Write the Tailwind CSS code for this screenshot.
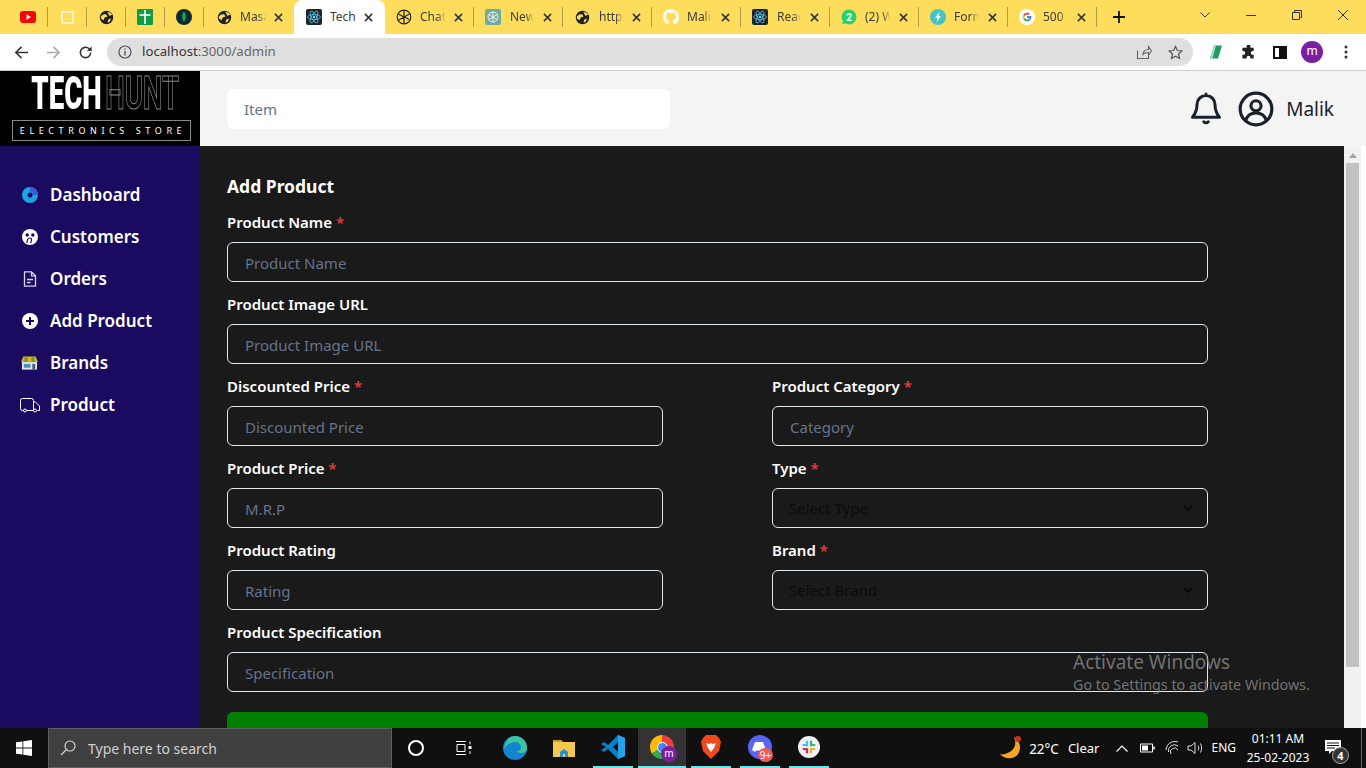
<!DOCTYPE html>
<html lang="en">
<head>
    <meta charset="UTF-8" />
    <title>Tech Hunt - Admin</title>
    <script src="https://cdn.jsdelivr.net/npm/@tailwindcss/browser@4"></script>
</head>
<body class="h-screen w-screen overflow-hidden flex flex-col bg-white font-['Noto_Sans',sans-serif]">

    <!-- tab strip -->
    <div class="h-[34px] shrink-0 bg-[#ffdd5c] flex items-center pl-[9px] text-[12px] text-[#3c3c3c]">
        <div class="w-[39px] h-[20px] flex items-center justify-center border-r border-[#b09a4a]">
            <svg viewBox="0 0 16 12" class="w-4 h-3"><rect width="16" height="12" rx="3" fill="#f00"/><path d="M6.5 3.2v5.6L11 6z" fill="#fff"/></svg>
        </div>
        <div class="w-[39px] h-[20px] flex items-center justify-center border-r border-[#b09a4a]">
            <div class="w-[13px] h-[13px] border-2 border-[#fff3c0]"></div>
        </div>
        <div class="w-[39px] h-[20px] flex items-center justify-center border-r border-[#b09a4a]">
            <svg viewBox="0 0 16 16" class="w-[15px] h-[15px]"><circle cx="8" cy="8" r="7.2" fill="#222"/><path d="M2 7c2-2 4-3 6-2l1 2-3 1-1 3-3-2zM9 2c2 0 4 1 5 3l-3 1zM10 10l3-1-2 4-2 0z" fill="#ffdd5c"/></svg>
        </div>
        <div class="w-[39px] h-[20px] flex items-center justify-center border-r border-[#b09a4a]">
            <svg viewBox="0 0 16 16" class="w-4 h-4"><rect width="16" height="16" rx="1" fill="#119a4a"/><path d="M2.500 6h11M8 1v14" stroke="#fff" stroke-width="1.600"/></svg>
        </div>
        <div class="w-[39px] h-[20px] flex items-center justify-center border-r border-[#b09a4a]">
            <svg viewBox="0 0 16 16" class="w-4 h-4"><circle cx="8" cy="8" r="8" fill="#0b2a33"/><path d="M8 2.500c2.400 2.400 2.400 7 0 10.500-2.400-3.500-2.400-8.100 0-10.500z" fill="#13aa52"/></svg>
        </div>

        <div class="w-[90px] h-[20px] flex items-center pl-[13px] pr-[11px]">
            <svg viewBox="0 0 16 16" class="w-[15px] h-[15px] shrink-0"><circle cx="8" cy="8" r="7.2" fill="#222"/><path d="M2 7c2-2 4-3 6-2l1 2-3 1-1 3-3-2zM9 2c2 0 4 1 5 3l-3 1zM10 10l3-1-2 4-2 0z" fill="#ffdd5c"/></svg>
            <span class="ml-[8px] w-[27px] overflow-hidden whitespace-nowrap [mask-image:linear-gradient(to_right,#000_65%,transparent)]">Masa</span>
            <svg viewBox="0 0 10 10" class="w-[9px] h-[9px] ml-auto"><path d="M1 1l8 8M9 1l-8 8" stroke="#333" stroke-width="1.700"/></svg>
        </div>
        <div class="w-[91px] h-[34px] bg-white rounded-t-[8px] flex items-center pl-[12px] pr-[12px]">
            <svg viewBox="0 0 16 16" class="w-4 h-4 shrink-0"><rect width="16" height="16" rx="2" fill="#20232a"/><g fill="none" stroke="#61dafb" stroke-width=".7"><ellipse cx="8" cy="8" rx="6.500" ry="2.500"/><ellipse cx="8" cy="8" rx="6.500" ry="2.500" transform="rotate(60 8 8)"/><ellipse cx="8" cy="8" rx="6.500" ry="2.500" transform="rotate(120 8 8)"/></g><circle cx="8" cy="8" r="1.300" fill="#61dafb"/></svg>
            <span class="ml-[8px] w-[26px] whitespace-nowrap">Tech</span>
            <svg viewBox="0 0 10 10" class="w-[9px] h-[9px] ml-auto"><path d="M1 1l8 8M9 1l-8 8" stroke="#333" stroke-width="1.700"/></svg>
        </div>
        <div class="w-[89px] h-[20px] flex items-center pl-[11px] pr-[10px] border-r border-[#b09a4a]">
            <svg viewBox="0 0 16 16" class="w-4 h-4 shrink-0" fill="none" stroke="#222" stroke-width="1.200"><circle cx="8" cy="8" r="6.800"/><path d="M8 1.500v6l5 3M2.500 5l5.500 3v6M13.500 5L8 8l-5 3"/></svg>
            <span class="ml-[8px] w-[26px] overflow-hidden whitespace-nowrap [mask-image:linear-gradient(to_right,#000_65%,transparent)]">Chat</span>
            <svg viewBox="0 0 10 10" class="w-[9px] h-[9px] ml-auto"><path d="M1 1l8 8M9 1l-8 8" stroke="#333" stroke-width="1.700"/></svg>
        </div>
        <div class="w-[89px] h-[20px] flex items-center pl-[11px] pr-[10px] border-r border-[#b09a4a]">
            <svg viewBox="0 0 16 16" class="w-4 h-4 shrink-0"><rect width="16" height="16" rx="2" fill="#74aa9c"/><g fill="none" stroke="#e8f2ef" stroke-width="1"><circle cx="8" cy="8" r="5"/><path d="M8 3v5l4 2.500M4 5.500L8 8v5M12 5.500L8 8l-4 2.500"/></g></svg>
            <span class="ml-[9px] w-[24px] overflow-hidden whitespace-nowrap [mask-image:linear-gradient(to_right,#000_65%,transparent)]">New</span>
            <svg viewBox="0 0 10 10" class="w-[9px] h-[9px] ml-auto"><path d="M1 1l8 8M9 1l-8 8" stroke="#333" stroke-width="1.700"/></svg>
        </div>
        <div class="w-[89px] h-[20px] flex items-center pl-[12px] pr-[10px] border-r border-[#b09a4a]">
            <svg viewBox="0 0 16 16" class="w-[15px] h-[15px] shrink-0"><circle cx="8" cy="8" r="7.200" fill="#222"/><path d="M2 7c2-2 4-3 6-2l1 2-3 1-1 3-3-2zM9 2c2 0 4 1 5 3l-3 1zM10 10l3-1-2 4-2 0z" fill="#ffdd5c"/></svg>
            <span class="ml-[9px] w-[25px] overflow-hidden whitespace-nowrap [mask-image:linear-gradient(to_right,#000_65%,transparent)]">https</span>
            <svg viewBox="0 0 10 10" class="w-[9px] h-[9px] ml-auto"><path d="M1 1l8 8M9 1l-8 8" stroke="#333" stroke-width="1.700"/></svg>
        </div>
        <div class="w-[89px] h-[20px] flex items-center pl-[11px] pr-[10px] border-r border-[#b09a4a]">
            <svg viewBox="0 0 16 16" class="w-4 h-4 shrink-0"><path fill="#fff" d="M8 0C3.580 0 0 3.580 0 8c0 3.540 2.290 6.530 5.470 7.590.4.070.55-.17.55-.38 0-.19-.01-.82-.01-1.490-2.010.37-2.530-.49-2.690-.94-.09-.23-.48-.94-.82-1.130-.28-.15-.68-.52-.01-.53.63-.01 1.080.58 1.230.82.72 1.210 1.870.87 2.330.66.070-.52.28-.87.51-1.070-1.780-.2-3.640-.89-3.640-3.950 0-.87.31-1.590.82-2.150-.08-.2-.36-1.020.08-2.120 0 0 .67-.21 2.200.82.64-.18 1.320-.27 2-.27.68 0 1.360.09 2 .27 1.530-1.040 2.200-.82 2.200-.82.44 1.100.16 1.920.08 2.120.51.56.82 1.270.82 2.150 0 3.070-1.870 3.750-3.650 3.950.29.25.54.73.54 1.480 0 1.070-.01 1.930-.01 2.200 0 .21.15.46.55.38A8.013 8.013 0 0 0 16 8c0-4.420-3.580-8-8-8z"/></svg>
            <span class="ml-[8px] w-[25px] overflow-hidden whitespace-nowrap [mask-image:linear-gradient(to_right,#000_65%,transparent)]">Malik</span>
            <svg viewBox="0 0 10 10" class="w-[9px] h-[9px] ml-auto"><path d="M1 1l8 8M9 1l-8 8" stroke="#333" stroke-width="1.700"/></svg>
        </div>
        <div class="w-[89px] h-[20px] flex items-center pl-[11px] pr-[10px] border-r border-[#b09a4a]">
            <svg viewBox="0 0 16 16" class="w-4 h-4 shrink-0"><rect width="16" height="16" rx="2" fill="#20232a"/><g fill="none" stroke="#61dafb" stroke-width=".7"><ellipse cx="8" cy="8" rx="6.500" ry="2.500"/><ellipse cx="8" cy="8" rx="6.500" ry="2.500" transform="rotate(60 8 8)"/><ellipse cx="8" cy="8" rx="6.500" ry="2.500" transform="rotate(120 8 8)"/></g><circle cx="8" cy="8" r="1.300" fill="#61dafb"/></svg>
            <span class="ml-[9px] w-[24px] overflow-hidden whitespace-nowrap [mask-image:linear-gradient(to_right,#000_65%,transparent)]">React</span>
            <svg viewBox="0 0 10 10" class="w-[9px] h-[9px] ml-auto"><path d="M1 1l8 8M9 1l-8 8" stroke="#333" stroke-width="1.700"/></svg>
        </div>
        <div class="w-[89px] h-[20px] flex items-center pl-[11px] pr-[10px] border-r border-[#b09a4a]">
            <svg viewBox="0 0 16 16" class="w-4 h-4 shrink-0"><circle cx="8" cy="8" r="7.500" fill="#25d366"/><path d="M1 15l1.500-4 2.500 3z" fill="#25d366"/><text x="8" y="11.500" font-size="10" font-weight="700" text-anchor="middle" fill="#fff" font-family="Roboto">2</text></svg>
            <span class="ml-[8px] w-[26px] overflow-hidden whitespace-nowrap [mask-image:linear-gradient(to_right,#000_65%,transparent)]">(2) W</span>
            <svg viewBox="0 0 10 10" class="w-[9px] h-[9px] ml-auto"><path d="M1 1l8 8M9 1l-8 8" stroke="#333" stroke-width="1.700"/></svg>
        </div>
        <div class="w-[89px] h-[20px] flex items-center pl-[11px] pr-[10px] border-r border-[#b09a4a]">
            <svg viewBox="0 0 16 16" class="w-4 h-4 shrink-0"><circle cx="8" cy="8" r="8" fill="#45c4c0"/><path d="M9.500 2.500L5 9h2.500L6.500 13.500 11 7H8.500z" fill="#e8fbfa"/></svg>
            <span class="ml-[8px] w-[25px] overflow-hidden whitespace-nowrap [mask-image:linear-gradient(to_right,#000_65%,transparent)]">Form</span>
            <svg viewBox="0 0 10 10" class="w-[9px] h-[9px] ml-auto"><path d="M1 1l8 8M9 1l-8 8" stroke="#333" stroke-width="1.700"/></svg>
        </div>
        <div class="w-[89px] h-[20px] flex items-center pl-[11px] pr-[10px] border-r border-[#b09a4a]">
            <svg viewBox="0 0 16 16" class="w-4 h-4 shrink-0"><circle cx="8" cy="8" r="8" fill="#fff"/><path d="M5 6.500A3.500 3.500 0 0 1 10.400 5.400" fill="none" stroke="#ea4335" stroke-width="1.800"/><path d="M5 6.500a3.500 3.500 0 0 0 0 3" fill="none" stroke="#fbbc05" stroke-width="1.800"/><path d="M5 9.500a3.500 3.500 0 0 0 5.500 1" fill="none" stroke="#34a853" stroke-width="1.800"/><path d="M8 8h3.500a3.500 3.500 0 0 1-1 2.500" fill="none" stroke="#4285f4" stroke-width="1.800"/></svg>
            <span class="ml-[8px] w-[25px] overflow-hidden whitespace-nowrap [mask-image:linear-gradient(to_right,#000_65%,transparent)]">500 e</span>
            <svg viewBox="0 0 10 10" class="w-[9px] h-[9px] ml-auto"><path d="M1 1l8 8M9 1l-8 8" stroke="#333" stroke-width="1.700"/></svg>
        </div>
        <svg viewBox="0 0 12 12" class="w-3 h-3 ml-[16px]" fill="none"><path d="M6 0v12M0 6h12" stroke="#111" stroke-width="1.800"/></svg>
        <div class="ml-auto flex items-center h-full">
            <svg viewBox="0 0 10 6" class="w-[10px] h-[6px] mb-[4px] mr-[36px]"><path d="M.5.500L5 5 9.500.500" fill="none" stroke="#333" stroke-width="1"/></svg>
            <div class="w-[10px] h-px bg-[#333] mb-[4px] mr-[36px]"></div>
            <svg viewBox="0 0 10 10" class="w-[10px] h-[10px] mb-[4px] mr-[36px]"><path d="M.5 2.500h7v7h-7zM2.500 2.500v-2h7v7h-2" fill="none" stroke="#333" stroke-width="1"/></svg>
            <svg viewBox="0 0 10 10" class="w-[10px] h-[10px] mb-[4px] mr-[18px]"><path d="M0 0l10 10M10 0L0 10" stroke="#333" stroke-width="1"/></svg>
        </div>
    </div>

    <!-- address bar -->
    <div class="h-[37px] shrink-0 bg-white border-b border-[#cfcfcf] flex items-center">
        <svg viewBox="0 0 16 16" class="w-[15px] h-[15px] ml-[14px]" fill="none" stroke="#333" stroke-width="1.700"><path d="M15 8H2M8 2L2 8l6 6"/></svg>
        <svg viewBox="0 0 16 16" class="w-[15px] h-[15px] ml-[17px]" fill="none" stroke="#aaa" stroke-width="1.700"><path d="M1 8h13M8 2l6 6-6 6"/></svg>
        <svg viewBox="0 0 16 16" class="w-[15px] h-[15px] ml-[17px]" fill="none" stroke="#333" stroke-width="1.700"><path d="M13.500 8a5.500 5.500 0 1 1-1.600-3.900L14 6"/><path d="M14.500 1.500V6.500H9.500z" fill="#333" stroke="none"/></svg>
        <div class="ml-[14px] w-[1086px] h-[28px] rounded-full bg-[#dfdfdf] flex items-center pl-[11px] pr-[10px]">
            <svg viewBox="0 0 14 14" class="w-[14px] h-[14px]" fill="none" stroke="#555" stroke-width="1.200"><circle cx="7" cy="7" r="6"/><path d="M7 6v4.500M7 3.500v1.200" stroke-width="1.400"/></svg>
            <span class="ml-[10px] text-[13.200px] text-[#333]">localhost<span class="text-[#666]">:3000/admin</span></span>
            <svg viewBox="0 0 16 16" class="w-[16px] h-[16px] ml-auto mr-[16px]" fill="none" stroke="#666" stroke-width="1.100"><path d="M1.500 6.500v8h11v-3M7 10.500c0-3 2-5 5.500-5V2.500l3 4.500-3 4V8.500c-2.500 0-4.500.5-5.500 2z"/></svg>
            <svg viewBox="0 0 16 16" class="w-[15px] h-[15px]" fill="none" stroke="#555" stroke-width="1.300"><path d="M8 1.500l2 4.400 4.800.5-3.600 3.200 1 4.700L8 11.900l-4.200 2.400 1-4.700L1.200 6.400 6 5.900z"/></svg>
        </div>
        <svg viewBox="0 0 14 16" class="w-[14px] h-[16px] ml-[16px]"><path d="M5 1.500h8L9 14.500H1z" fill="#1f9d62"/><path d="M5 1.500L1 14.500h2.500L7 1.500z" fill="#a8dcc4"/></svg>
        <svg viewBox="0 0 16 16" class="w-[15px] h-[15px] ml-[18px]" fill="#222"><path d="M6 1.500a2 2 0 0 1 4 0V3h3.500v3.500h-1a2 2 0 0 0 0 4h1V14.500H10v-1a2 2 0 0 0-4 0v1H1.500V10.500h1a2 2 0 0 0 0-4h-1V3H6z"/></svg>
        <div class="w-[14px] h-[13px] ml-[17px] border-2 border-[#111] flex justify-end"><div class="w-[6px] bg-[#111]"></div></div>
        <div class="w-[22px] h-[22px] ml-[14px] rounded-full bg-[#7b1fa2] text-white text-[12px] leading-[20px] text-center">m</div>
        <svg viewBox="0 0 4 14" class="w-[4px] h-[14px] ml-[21px]" fill="#333"><circle cx="2" cy="2" r="1.500"/><circle cx="2" cy="7" r="1.500"/><circle cx="2" cy="12" r="1.500"/></svg>
    </div>

    <!-- app -->
    <div class="flex-1 min-h-0 flex relative">
        <aside class="w-[200px] shrink-0 flex flex-col bg-[#1a0a60]">
            <div class="h-[75px] shrink-0 bg-black flex flex-col items-center">
                <div class="h-[38px] w-[170px] mt-[3px] flex justify-center overflow-hidden ml-[10px]">
                    <span class="text-[46px] leading-[38px] font-black font-['Roboto',sans-serif] text-white scale-x-[.6] origin-center whitespace-nowrap">TECH<span class="ml-[6px] font-bold text-transparent [-webkit-text-stroke:1px_#8a8a8a]">HUNT</span></span>
                </div>
                <div class="w-[179px] h-[21px] mt-[8px] ml-[3px] pl-[3px] border border-[#888] flex items-center justify-center text-[9px] tracking-[.51em] text-white whitespace-nowrap">ELECTRONICS STORE</div>
            </div>
            <nav class="pt-[28px] flex flex-col text-[17px] font-semibold text-white">
                <a class="h-[42px] flex items-center pl-[22px] gap-[12px]">
                    <svg viewBox="0 0 16 16" class="w-4 h-4"><circle cx="8" cy="8" r="8" fill="#1aa6e4"/><path d="M8 0a8 8 0 0 1 8 8h-5a3 3 0 0 0-3-3z" fill="#3c5bd6"/><circle cx="8" cy="8" r="2.500" fill="#1a0a60"/></svg>
                    Dashboard
                </a>
                <a class="h-[42px] flex items-center pl-[22px] gap-[12px]">
                    <svg viewBox="0 0 16 16" class="w-4 h-4"><circle cx="8" cy="8" r="8" fill="#fff"/><circle cx="5.200" cy="6" r="1.700" fill="#1a0a60"/><circle cx="10.800" cy="6" r="1.700" fill="#1a0a60"/><path d="M8 9c-2 0-3 2-3 5M8 9c2 0 2 2 .5 5" fill="none" stroke="#1a0a60" stroke-width="1.200"/></svg>
                    Customers
                </a>
                <a class="h-[42px] flex items-center pl-[22px] gap-[12px]">
                    <svg viewBox="0 0 16 16" class="w-4 h-4" fill="none" stroke="#d8d4ec" stroke-width="1.300"><path d="M2.500 .8h7l4 4v10.400h-11zM9.500 .8v4h4M5 8.500h6M5 11.500h3.500"/></svg>
                    Orders
                </a>
                <a class="h-[42px] flex items-center pl-[22px] gap-[12px]">
                    <svg viewBox="0 0 16 16" class="w-4 h-4"><circle cx="8" cy="8" r="8" fill="#fff"/><path d="M8 4v8M4 8h8" stroke="#1a0a60" stroke-width="2"/></svg>
                    Add Product
                </a>
                <a class="h-[42px] flex items-center pl-[21px] gap-[12px]">
                    <svg viewBox="0 0 18 16" class="w-[17px] h-4"><path d="M1 7h16v8H1z" fill="#dfe6ea"/><path d="M2.500 1h13L18 7H0z" fill="#e8b00f"/><path d="M4 1h3v6H3zM11 1h3l1 6h-4z" fill="#6d9e3c"/><path d="M3 9h7v4H3z" fill="#4a90c0"/><path d="M12 9h3v6h-3z" fill="#4a5a66"/></svg>
                    Brands
                </a>
                <a class="h-[42px] flex items-center pl-[20px] gap-[10px]">
                    <svg viewBox="0 0 20 15" class="w-[20px] h-[15px]" fill="none" stroke="#fff" stroke-width="1"><path d="M4 12.500H2.500a2 2 0 0 1-2-2v-8a2 2 0 0 1 2-2h9a2 2 0 0 1 2 2v10h-7M13.500 4h2l4 4v4.500h-2"/><circle cx="5" cy="12.500" r="1.500"/><circle cx="15" cy="12.500" r="1.500"/></svg>
                    Product
                </a>
            </nav>
        </aside>

        <div class="flex-1 min-w-0 flex flex-col">
            <header class="h-[75px] shrink-0 bg-[#f4f4f4] flex items-center pl-[27px] pr-[32px] pt-[1px]">
                <div class="w-[443px] h-[40px] bg-white rounded-md flex items-center pl-[17px] text-[15px] text-[#64748b]">Item</div>
                <svg viewBox="0 0 24 24" class="w-[36px] h-[36px] ml-auto" fill="none" stroke="#1a202c" stroke-width="2" stroke-linecap="round" stroke-linejoin="round"><path d="M18 9a6 6 0 0 0-12 0c0 6-3 8-3 8.500h18c0-.5-3-2.500-3-8.500zM12 3V2M10.500 20.500a2 2 0 0 0 3 0"/></svg>
                <svg viewBox="0 0 24 24" class="w-[38px] h-[38px] ml-[13px]" fill="none" stroke="#1a202c" stroke-width="2"><circle cx="12" cy="12" r="10"/><circle cx="12" cy="10" r="3.200"/><path d="M5.500 19c1-3 3.500-4.500 6.500-4.500s5.500 1.500 6.500 4.500"/></svg>
                <span class="ml-[11px] text-[19px] text-[#1a202c]">Malik</span>
            </header>

            <div class="flex-1 min-h-0 flex bg-[#1a1a1a]">
                <main class="flex-1 min-w-0 overflow-hidden pl-[27px] pt-[28px] text-white">
                    <form class="w-[981px]">
                        <h2 class="text-[17.500px] leading-[24px] font-bold mb-[12px]">Add Product</h2>
                        <label class="block text-[15px] leading-[24px] font-semibold mb-[8px]">Product Name <span class="text-[#e53e3e]">*</span></label>
                        <input placeholder="Product Name" class="block w-full h-[40px] mb-[10px] px-[17px] pt-[2px] rounded-md border border-[#e2e8f0] bg-transparent text-[15px] placeholder:text-[#64748b]" />
                        <label class="block text-[15px] leading-[24px] font-semibold mb-[8px]">Product Image URL</label>
                        <input placeholder="Product Image URL" class="block w-full h-[40px] mb-[10px] px-[17px] pt-[2px] rounded-md border border-[#e2e8f0] bg-transparent text-[15px] placeholder:text-[#64748b]" />
                        <div class="grid grid-cols-2 gap-x-[109px]">
                            <div>
                                <label class="block text-[15px] leading-[24px] font-semibold mb-[8px]">Discounted Price <span class="text-[#e53e3e]">*</span></label>
                                <input placeholder="Discounted Price" class="block w-full h-[40px] mb-[10px] px-[17px] pt-[2px] rounded-md border border-[#e2e8f0] bg-transparent text-[15px] placeholder:text-[#64748b]" />
                            </div>
                            <div>
                                <label class="block text-[15px] leading-[24px] font-semibold mb-[8px]">Product Category <span class="text-[#e53e3e]">*</span></label>
                                <input placeholder="Category" class="block w-full h-[40px] mb-[10px] px-[17px] pt-[2px] rounded-md border border-[#e2e8f0] bg-transparent text-[15px] placeholder:text-[#64748b]" />
                            </div>
                            <div>
                                <label class="block text-[15px] leading-[24px] font-semibold mb-[8px]">Product Price <span class="text-[#e53e3e]">*</span></label>
                                <input placeholder="M.R.P" class="block w-full h-[40px] mb-[10px] px-[17px] pt-[2px] rounded-md border border-[#e2e8f0] bg-transparent text-[15px] placeholder:text-[#64748b]" />
                            </div>
                            <div>
                                <label class="block text-[15px] leading-[24px] font-semibold mb-[8px]">Type <span class="text-[#e53e3e]">*</span></label>
                                <div class="h-[40px] mb-[10px] pl-[16px] pr-[14px] rounded-md border border-[#e2e8f0] flex items-center justify-between text-[15px] text-[#0a0a0a]">
                                    Select Type
                                    <svg viewBox="0 0 10 6" class="w-[10px] h-[6px]"><path d="M1 1l4 4 4-4" fill="none" stroke="#0a0a0a" stroke-width="2"/></svg>
                                </div>
                            </div>
                            <div>
                                <label class="block text-[15px] leading-[24px] font-semibold mb-[8px]">Product Rating</label>
                                <input placeholder="Rating" class="block w-full h-[40px] mb-[10px] px-[17px] pt-[2px] rounded-md border border-[#e2e8f0] bg-transparent text-[15px] placeholder:text-[#64748b]" />
                            </div>
                            <div>
                                <label class="block text-[15px] leading-[24px] font-semibold mb-[8px]">Brand <span class="text-[#e53e3e]">*</span></label>
                                <div class="h-[40px] mb-[10px] pl-[16px] pr-[14px] rounded-md border border-[#e2e8f0] flex items-center justify-between text-[15px] text-[#0a0a0a]">
                                    Select Brand
                                    <svg viewBox="0 0 10 6" class="w-[10px] h-[6px]"><path d="M1 1l4 4 4-4" fill="none" stroke="#0a0a0a" stroke-width="2"/></svg>
                                </div>
                            </div>
                        </div>
                        <label class="block text-[15px] leading-[24px] font-semibold mb-[8px]">Product Specification</label>
                        <input placeholder="Specification" class="block w-full h-[40px] mb-[20px] px-[17px] pt-[2px] rounded-md border border-[#e2e8f0] bg-transparent text-[15px] placeholder:text-[#64748b]" />
                        <button type="button" class="block w-full h-[40px] pt-[3px] rounded-md bg-[#008000] text-white text-[16px] font-semibold">Submit</button>
                    </form>
                </main>
                <div class="w-[22px] shrink-0 flex bg-white">
                    <div class="w-[17px] bg-[#f1f1f1] flex flex-col items-center">
                        <svg viewBox="0 0 8 5" class="w-[8px] h-[5px] mt-[7px] shrink-0"><path d="M4 0l4 5H0z" fill="#a3a3a3"/></svg>
                        <div class="w-[13px] h-[504px] mt-[5px] shrink-0 bg-[#c1c1c1]"></div>
                    </div>
                </div>
            </div>
        </div>

        <!-- activation watermark sits on top of the page -->
        <div class="absolute left-[1073px] top-[578px] pointer-events-none text-[#8a8a8a]/80 whitespace-nowrap">
            <div class="text-[19px] leading-[26px]">Activate Windows</div>
            <div class="text-[14.300px] leading-[20px]">Go to Settings to activate Windows.</div>
        </div>
    </div>

    <!-- taskbar -->
    <div class="h-[40px] shrink-0 bg-[#101010] flex items-center text-white">
        <svg viewBox="0 0 16 16" class="w-4 h-4 ml-[16px]" fill="#fff"><path d="M0 2.300l6.500-.9v6.200H0zM7.300 1.300L16 0v7.600H7.300zM0 8.400h6.500v6.200L0 13.700zM7.300 8.400H16V16l-8.700-1.200z"/></svg>
        <div class="w-[344px] h-[40px] ml-[16px] bg-[#404040] border border-[#5f5f5f] flex items-center pl-[11px] text-[14px] text-[#d0d0d0]">
            <svg viewBox="0 0 16 16" class="w-4 h-4 mr-[12px]" fill="none" stroke="#d8d8d8" stroke-width="1.100"><circle cx="10" cy="6" r="5"/><path d="M6.500 9.500L1 15"/></svg>
            Type here to search
        </div>
        <div class="w-[16px] h-[16px] ml-[16px] rounded-full border-2 border-white"></div>
        <svg viewBox="0 0 16 14" class="w-[16px] h-[14px] ml-[32px]" fill="none" stroke="#fff" stroke-width="1"><path d="M0 .5h10M0 13.500h10M1 3.500h8v7H1zM14 .5v3M14 10v3"/><rect x="12.500" y="5" width="3" height="3" fill="#fff" stroke="none"/></svg>

        <svg viewBox="0 0 24 24" class="w-[24px] h-[24px] ml-[31px]"><circle cx="12" cy="12" r="12" fill="#1483d0"/><path d="M12 0a12 12 0 0 1 12 13c0 3-3 4-6 4-2 0-4-1-4-2 2 0 4-1 4-4 0-3-3-5-6-5-5 0-9 4-11 7C2 5 6 0 12 0z" fill="#3bc4a0"/></svg>
        <svg viewBox="0 0 22 18" class="w-[22px] h-[18px] ml-[26px]"><path d="M0 1h8l2 2h12v15H0z" fill="#f4c84e"/><path d="M0 1h8l2 2H0z" fill="#d49a1f"/><path d="M7 18v-5l4-3 4 3v5h-3v-3h-2v3z" fill="#2d8fd6"/></svg>
        <div class="w-[40px] h-[40px] ml-[18px] border-b-2 border-[#6fe6e6] flex items-center justify-center">
            <svg viewBox="0 0 24 24" class="w-[24px] h-[24px]"><path d="M17 0l7 3v18l-7 3L7 14l-4 3-3-2 5-3-5-3 3-2 4 3z" fill="#0a7fcc"/><path d="M17 0l7 3v18l-7 3z" fill="#23a4ea"/><path d="M17 7l-5 5 5 5z" fill="#101010"/></svg>
        </div>

        <div class="w-[48px] h-[40px] ml-[5px] bg-[#333] border-b-2 border-[#6fe6e6] flex items-center justify-center relative">
            <div class="w-[24px] h-[24px] rounded-full bg-[conic-gradient(#ea4335_0_33%,#34a853_33%_66%,#fbbc05_66%_100%)] flex items-center justify-center">
                <div class="w-[11px] h-[11px] rounded-full bg-[#4285f4] border border-white"></div>
            </div>
            <div class="absolute right-[9px] bottom-[4px] w-[16px] h-[16px] rounded-full bg-[#7b1fa2] text-[10px] leading-[14px] text-center">m</div>
        </div>
        <div class="w-[40px] h-[40px] ml-[5px] border-b-2 border-[#6fe6e6] flex items-center justify-center">
            <svg viewBox="0 0 20 24" class="w-[20px] h-[24px]"><path d="M5 0h10l3 3 2 4-2 9-8 8-8-8-2-9 2-4z" fill="#f1481d"/><path d="M5 8l3 1 2-1 2 1 3-1-2 5-3 4-3-4z" fill="#fff"/></svg>
        </div>
        <div class="w-[40px] h-[40px] ml-[9px] border-b-2 border-[#6fe6e6] flex items-center justify-center relative">
            <div class="w-[24px] h-[24px] rounded-full bg-[#5865f2] flex items-center justify-center">
                <svg viewBox="0 0 14 10" class="w-[14px] h-[10px] mr-[3px]"><path d="M3 0h8l3 8-3 2-1-1.500H4L3 10 0 8z" fill="#fff"/></svg>
            </div>
            <div class="absolute right-[7px] top-[20px] w-[15px] h-[14px] rounded-full bg-[#ed5a5a] text-[10px] leading-[14px] text-center whitespace-nowrap">9+</div>
        </div>
        <div class="w-[40px] h-[40px] ml-[9px] border-b-2 border-[#6fe6e6] flex items-center justify-center">
            <div class="w-[22px] h-[22px] rounded-full bg-[#f1f1f1] flex items-center justify-center">
                <svg viewBox="0 0 14 14" class="w-[14px] h-[14px]" stroke-width="2.200" stroke-linecap="round"><path d="M5 1.500v4M1.500 5H5" stroke="#36c5f0"/><path d="M9 1.500v4" stroke="#2eb67d"/><path d="M9 5h3.500" stroke="#2eb67d"/><path d="M9 9h3.500M9 9v3.500" stroke="#ecb22e"/><path d="M1.500 9H5M5 9v3.500" stroke="#e01e5a"/></svg>
            </div>
        </div>

        <div class="ml-auto flex items-center h-full">
            <svg viewBox="0 0 24 24" class="w-[24px] h-[24px]"><path d="M16 1c3 7 1 14-9 17-2 .500-4 .500-5 0 4 6 20 7 20-7 0-4-3-8-6-10z" fill="#f5a623"/><circle cx="20" cy="3" r="3" fill="#c8321e"/></svg>
            <span class="ml-[7px] text-[13.500px] pt-[2px]">22°C</span>
            <span class="ml-[9px] text-[13px] pt-[2px]">Clear</span>
            <svg viewBox="0 0 12 7" class="w-[12px] h-[7px] ml-[17px]"><path d="M.5 6.500L6 1l5.500 5.500" fill="none" stroke="#fff" stroke-width="1.200"/></svg>
            <svg viewBox="0 0 15 10" class="w-[15px] h-[10px] ml-[12px]" fill="none" stroke="#fff"><path d="M.5 1h12v8H.5z"/><path d="M2 2.500h6v5H2z" fill="#fff" stroke="none"/><path d="M14 3.500v3" stroke-width="1.500"/></svg>
            <svg viewBox="0 0 14 14" class="w-[14px] h-[14px] ml-[10px]" fill="none" stroke="#ddd" stroke-width="1"><path d="M1 9a9 9 0 0 1 12-8M3.500 11a6 6 0 0 1 9.500-6M6 13a3 3 0 0 1 7-4"/></svg>
            <svg viewBox="0 0 16 14" class="w-[16px] h-[14px] ml-[8px]" fill="none" stroke="#ddd" stroke-width="1"><path d="M1 5h3l4-3.500v11L4 9H1zM11 4.500c1 1.500 1 3.500 0 5M13.500 2.500c1.500 3 1.500 6 0 9"/></svg>
            <span class="ml-[8px] text-[12px]">ENG</span>
            <div class="ml-[11px] w-[62px] text-[12px] leading-[19px] whitespace-nowrap flex flex-col items-center"><span>01:11 AM</span><span>25-02-2023</span></div>
            <div class="ml-[16px] mr-[12px] mt-[8px] w-[24px] h-[24px] relative">
                <svg viewBox="0 0 16 14" class="w-[16px] h-[14px]"><path d="M0 0h16v11H7l-3 3v-3H0z" fill="#fff"/><path d="M2 3h12M2 5.500h12M2 8h8" stroke="#101010"/></svg>
                <div class="absolute right-0 bottom-0 w-[17px] h-[17px] rounded-full bg-[#333] border border-[#aaa] text-[11px] font-bold leading-[15px] text-center">4</div>
            </div>
            <div class="w-px h-full bg-[#666]"></div>
            <div class="w-[4px]"></div>
        </div>
    </div>

</body>
</html>
